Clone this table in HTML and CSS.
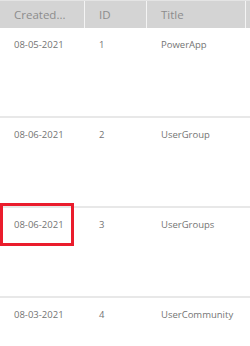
FILE: index.html
```html
<!DOCTYPE html>
<html lang="en">
<head>
    <meta charset="UTF-8">
    <meta name="viewport" content="width=device-width, initial-scale=1.0">
    <title>Items</title>
    <link rel="stylesheet" href="styles.css">
</head>
<body>
    <div class="grid">
        <div class="head">
            <div class="col">Created...</div>
            <div class="col">ID</div>
            <div class="col">Title</div>
            <div class="col"></div>
        </div>

        <div class="row">
            <div class="cell">08-05-2021</div>
            <div class="cell">1</div>
            <div class="cell">PowerApp</div>
        </div>
        <div class="row">
            <div class="cell">08-06-2021</div>
            <div class="cell">2</div>
            <div class="cell">UserGroup</div>
        </div>
        <div class="row">
            <div class="cell marked">08-06-2021</div>
            <div class="cell">3</div>
            <div class="cell">UserGroups</div>
        </div>
        <div class="row">
            <div class="cell">08-03-2021</div>
            <div class="cell">4</div>
            <div class="cell">UserCommunity</div>
        </div>
    </div>
</body>
</html>
```

FILE: styles.css
```css
body {
    margin: 0;
    font-family: 'Open Sans', 'Noto Sans', sans-serif;
    background-color: #ffffff;
    color: #747474;
}

.grid {
    width: 250px;
}

.head,
.row {
    display: grid;
    grid-template-columns: 85px 62px 99px 1fr;
}

.head {
    height: 28px;
    background-color: #d4d4d4;
    border-top: 1px solid #e4e4e4;
    box-sizing: border-box;
}

.col {
    font-size: 11.5px;
    color: #8c8c8c;
    padding-left: 14px;
    line-height: 27px;
    border-right: 1px solid #f4f4f4;
}

.col:last-child {
    border-right: none;
}

.row {
    height: 88px;
    border-bottom: 2px solid #e8e8e8;
}

.row:last-child {
    height: 50px;
    border-bottom: none;
}

.cell {
    font-size: 9.5px;
    padding-left: 14px;
    padding-top: 10px;
    position: relative;
}

/* highlight box drawn over the date cell */
.marked::before {
    content: "";
    position: absolute;
    left: 0;
    top: -5px;
    width: 74px;
    height: 43px;
    border: 3px solid #ea1c2c;
    box-sizing: border-box;
}
```
